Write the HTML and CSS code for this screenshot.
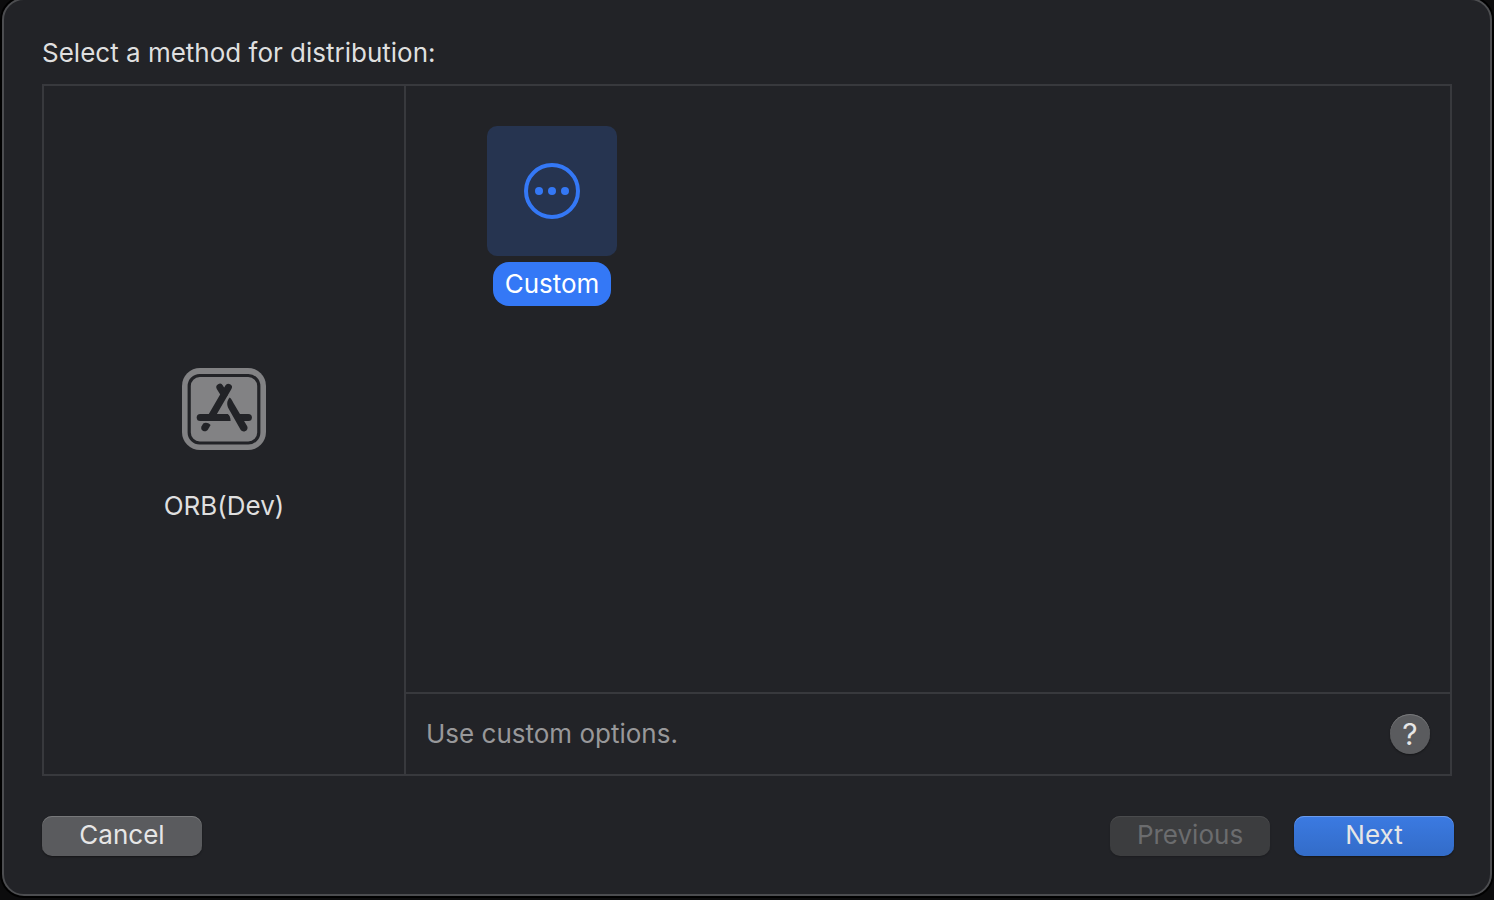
FILE: index.html
```html
<!DOCTYPE html>
<html lang="en">
<head>
  <meta charset="UTF-8">
  <title>Distribute App</title>
  <meta name="viewport" content="width=device-width, initial-scale=1.0">
  <link rel="stylesheet" href="styles.css">
</head>
<body>
  <form class="dialog">
    <h1 class="title" id="title">Select a method for distribution:</h1>

    <div class="panel">
      <aside class="sidebar">
        <svg width="84" height="82" viewBox="0 0 84 82" fill="none" aria-hidden="true">
          <rect width="84" height="82" rx="18" fill="#828284"/>
          <rect x="7.2" y="7.5" width="69.6" height="67.5" rx="10.5" stroke="#222327" stroke-width="3.2"/>
          <g stroke="#222327" stroke-width="7" stroke-linecap="round">
            <path d="M46.4 19.3L29.4 48.6"/>
            <path d="M37.9 19.3L42 26"/>
            <path d="M18.2 49.4H44"/>
            <path d="M58 49.4H66.4"/>
          </g>
          <path d="M47.7 29.6C44.6 33 44.6 37 46.8 41L58.6 61.8C61.2 65.6 67 62.4 65.2 58.2L51.6 35.2C50 32.4 49.4 31 47.7 29.6Z" fill="#222327"/>
          <path d="M43 45.9H45.6C47.6 47.6 48.7 49.8 48.6 52.9H43Z" fill="#222327"/>
          <path d="M21.2 55.4C23.6 54 26.4 54.6 28.6 57L26 61.6C23.6 65.4 17.6 62.4 19.6 58.2Z" fill="#222327"/>
        </svg>
        <span>ORB(Dev)</span>
      </aside>

      <main class="content">
        <div class="methods" role="radiogroup" aria-labelledby="title">
          <label class="method">
            <input type="radio" name="method" value="custom" checked>
            <span class="method-icon">
              <svg width="56" height="56" viewBox="0 0 56 56" fill="#3478f6" aria-hidden="true">
                <circle cx="28" cy="28" r="26" fill="none" stroke="#3478f6" stroke-width="4"/>
                <circle cx="15" cy="28" r="4"/>
                <circle cx="28" cy="28" r="4"/>
                <circle cx="41" cy="28" r="4"/>
              </svg>
            </span>
            <span class="method-name">Custom</span>
          </label>
        </div>
        <div class="description">
          <span>Use custom options.</span>
          <button type="button" class="help" aria-label="Help">?</button>
        </div>
      </main>
    </div>

    <div class="actions">
      <button type="button" class="btn">Cancel</button>
      <button type="button" class="btn previous" disabled>Previous</button>
      <button type="submit" class="btn primary">Next</button>
    </div>
  </form>
</body>
</html>
```
FILE: styles.css
```css
* {
  box-sizing: border-box;
}

body {
  margin: 0;
  height: 100vh;
  display: flex;
  overflow: hidden;
  background: #0c0c0d;
  color: #dfdfdf;
  font-family: Inter, sans-serif;
  font-size: 26px;
  line-height: 32px;
}

.dialog {
  flex: 1;
  display: flex;
  flex-direction: column;
  margin: -2px 2px 4px;
  padding: 37px 36px 38px 38px;
  background: #222327;
  border: 2px solid #4c4d50;
  border-radius: 22px;
  box-shadow: 0 0 0 2px #000;
}

.title {
  margin: 0 0 15px;
  font-size: 26px;
  font-weight: 400;
}

.panel {
  flex: 1;
  display: flex;
  margin-right: 2px;
  border: 2px solid #38393d;
}

.sidebar {
  width: 362px;
  display: flex;
  flex-direction: column;
  align-items: center;
  justify-content: center;
  gap: 40px;
  padding-top: 30px;
  border-right: 2px solid #38393d;
}

.content {
  flex: 1;
  display: flex;
  flex-direction: column;
}

.methods {
  flex: 1;
  padding: 40px 81px;
}

.method {
  display: inline-flex;
  flex-direction: column;
  align-items: center;
  gap: 6px;
}

.method input {
  position: absolute;
  opacity: 0;
}

.method-icon {
  width: 130px;
  height: 130px;
  display: flex;
  align-items: center;
  justify-content: center;
  border-radius: 10px;
}

.method-name {
  padding: 6px 12px;
  border-radius: 16px;
}

.method input:checked ~ .method-icon {
  background: #263450;
}

.method input:checked ~ .method-name {
  background: #3478f6;
  color: #fff;
}

.description {
  display: flex;
  align-items: center;
  justify-content: space-between;
  height: 82px;
  padding: 0 20px;
  border-top: 2px solid #38393d;
  color: #98989a;
}

button {
  border: none;
  font: inherit;
  color: #e6e6e6;
  background: #5a5b5e;
  box-shadow: inset 0 1px #77787a, 0 1px 2px #00000066;
}

.help {
  width: 40px;
  height: 40px;
  padding: 0;
  border-radius: 50%;
  font-size: 30px;
}

.actions {
  display: flex;
  gap: 24px;
  margin-top: 40px;
}

.btn {
  width: 160px;
  height: 40px;
  padding: 0 0 2px;
  border-radius: 10px;
}

.previous {
  margin-left: auto;
}

.btn:disabled {
  background: #3c3d3f;
  color: #6b6c6e;
  box-shadow: inset 0 1px #4a4b4d, 0 1px 2px #00000033;
}

.primary {
  background: linear-gradient(#3b7ae2, #336cc8);
  box-shadow: inset 0 1px #6b9bec, 0 1px 2px #00000066;
}
```
